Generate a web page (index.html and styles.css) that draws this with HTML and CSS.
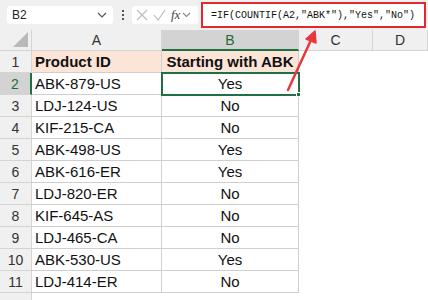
FILE: index.html
```html
<!DOCTYPE html>
<html>
<head>
<meta charset="utf-8">
<link rel="stylesheet" href="styles.css">
</head>
<body>
<div class="app">
  <div class="toolbar">
    <div class="namebox"><span class="ref">B2</span>
      <svg class="chev" width="10" height="6" viewBox="0 0 10 6"><path d="M1 1l4 4 4-4" fill="none" stroke="#555" stroke-width="1.2"/></svg>
    </div>
    <div class="dots"><i></i><i></i><i></i></div>
    <div class="fxbox">
      <svg width="12" height="12" viewBox="0 0 12 12"><path d="M1 1l10 10M11 1L1 11" stroke="#bbb" stroke-width="1.1"/></svg>
      <svg width="13" height="12" viewBox="0 0 13 12"><path d="M1 6l4 5 7-10" fill="none" stroke="#bbb" stroke-width="1.1"/></svg>
      <span class="fx">fx</span>
      <svg class="chev2" width="9" height="6" viewBox="0 0 9 6"><path d="M1 1l3.5 3.5L8 1" fill="none" stroke="#888" stroke-width="1.1"/></svg>
    </div>
    <div class="formula">=IF(COUNTIF(A2,"ABK*"),"Yes","No")</div>
  </div>
  <div class="sheet">
    <div class="corner"><span class="tri"></span></div>
    <div class="colh">A</div>
    <div class="colh sel">B</div>
    <div class="colh">C</div>
    <div class="colh">D</div>

    <div class="rowh">1</div><div class="cell a head">Product ID</div><div class="cell b head">Starting with ABK</div><div class="blank"></div><div class="blank"></div>
    <div class="rowh sel">2</div><div class="cell a">ABK-879-US</div><div class="cell b active">Yes<span class="handle"></span></div><div class="blank"></div><div class="blank"></div>
    <div class="rowh">3</div><div class="cell a">LDJ-124-US</div><div class="cell b">No</div><div class="blank"></div><div class="blank"></div>
    <div class="rowh">4</div><div class="cell a">KIF-215-CA</div><div class="cell b">No</div><div class="blank"></div><div class="blank"></div>
    <div class="rowh">5</div><div class="cell a">ABK-498-US</div><div class="cell b">Yes</div><div class="blank"></div><div class="blank"></div>
    <div class="rowh">6</div><div class="cell a">ABK-616-ER</div><div class="cell b">Yes</div><div class="blank"></div><div class="blank"></div>
    <div class="rowh">7</div><div class="cell a">LDJ-820-ER</div><div class="cell b">No</div><div class="blank"></div><div class="blank"></div>
    <div class="rowh">8</div><div class="cell a">KIF-645-AS</div><div class="cell b">No</div><div class="blank"></div><div class="blank"></div>
    <div class="rowh">9</div><div class="cell a">LDJ-465-CA</div><div class="cell b">No</div><div class="blank"></div><div class="blank"></div>
    <div class="rowh">10</div><div class="cell a">ABK-530-US</div><div class="cell b">Yes</div><div class="blank"></div><div class="blank"></div>
    <div class="rowh">11</div><div class="cell a">LDJ-414-ER</div><div class="cell b">No</div><div class="blank"></div><div class="blank"></div>
    <div class="rowh"></div><div class="blank"></div><div class="blank"></div><div class="blank"></div><div class="blank"></div>
  </div>
  <svg class="arrow" width="428" height="300" viewBox="0 0 428 300">
    <line x1="288" y1="90" x2="311" y2="40" stroke="#e8383d" stroke-width="2.5" stroke-linecap="round"/>
    <path d="M315 31 L306 39 L316 43 Z" fill="#e8383d" stroke="#e8383d" stroke-width="1.5" stroke-linejoin="round"/>
  </svg>
</div>
</body>
</html>
```

FILE: styles.css
```css
* { box-sizing: border-box; }
html, body { margin: 0; padding: 0; background: #fff; }
body { width: 428px; height: 300px; overflow: hidden; font-family: "Liberation Sans", Arial, sans-serif; }
.app { position: relative; width: 428px; height: 300px; }

.toolbar {
  height: 30px;
  background: #f0f0f0;
  display: flex;
  align-items: center;
  padding-left: 7px;
}
.namebox {
  width: 106px; height: 18px;
  background: #fff;
  border-radius: 3px;
  display: flex; align-items: center; justify-content: space-between;
  padding: 0 6px 0 5px;
  font-size: 12px; color: #222;
}
.dots { width: 19px; display: flex; flex-direction: column; align-items: center; gap: 2px; }
.dots i { width: 2px; height: 2px; background: #555; display: block; }
.fxbox {
  width: 66px; height: 18px;
  background: #fff; border-radius: 3px;
  display: flex; align-items: center; gap: 5px;
  padding-left: 4px;
}
.fx { font-family: "Liberation Serif", serif; font-style: italic; font-size: 13px; color: #444; margin-left: 0; }
.chev2 { margin-left: -3px; }
.formula {
  margin-left: 3px;
  width: 225px; height: 26px;
  border: 2px solid #e0282e;
  background: #fff;
  font-family: "Liberation Mono", monospace;
  font-size: 10px;
  color: #111;
  display: flex; align-items: center;
  padding-left: 8px;
  white-space: nowrap;
}

.sheet {
  display: grid;
  grid-template-columns: 32px 130px 137px 74px 1fr;
  grid-template-rows: 21px repeat(12, 22px);
}
.corner { background: #f0f0f0; border-right: 1px solid #d4d4d4; border-bottom: 1px solid #d4d4d4; position: relative; }
.tri { position: absolute; right: 3px; bottom: 3px; width: 0; height: 0; border-left: 15px solid transparent; border-bottom: 15px solid #b9b9b9; }
.colh {
  background: #f0f0f0;
  border-right: 1px solid #d4d4d4;
  border-bottom: 1px solid #d4d4d4;
  display: flex; align-items: center; justify-content: center;
  font-size: 14px; color: #333;
}
.colh.sel { background: #d3d3d3; color: #1e6b3c; border-bottom: 2px solid #1e7145; }
.rowh {
  background: #f0f0f0;
  border-right: 1px solid #d4d4d4;
  border-bottom: 1px solid #d4d4d4;
  display: flex; align-items: center; justify-content: center;
  font-size: 14px; color: #333;
}
.rowh.sel { background: #d3d3d3; color: #1e6b3c; border-right: 2px solid #1e7145; }
.cell {
  border-right: 1px solid #cfcfcf;
  border-bottom: 1px solid #cfcfcf;
  font-size: 15px; color: #111;
  display: flex; align-items: center;
  white-space: nowrap;
}
.cell.a { padding-left: 3px; }
.cell.b { justify-content: center; }
.cell.head { background: #fce4d6; font-weight: bold; }
.cell.head.a { padding-left: 3px; }
.cell.active { position: relative; outline: 2px solid #1e7145; outline-offset: -1px; }
.handle { position: absolute; right: -3px; bottom: -3px; width: 5px; height: 5px; background: #1e7145; border: 1px solid #fff; }
.blank { background: #fff; }

.arrow { position: absolute; left: 0; top: 0; pointer-events: none; }
```
